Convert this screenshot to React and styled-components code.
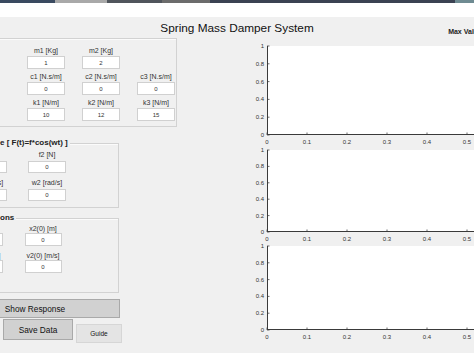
import React from 'react';
import styled, { createGlobalStyle } from 'styled-components';

const GlobalStyle = createGlobalStyle`
  body {
    margin: 0;
    background: #fff;
    font-family: "Liberation Sans", Arial, sans-serif;
  }
`;

const Page = styled.div`
  width: 474px;
  height: 355px;
  overflow: hidden;
  background: #fff;
`;

const TitleBar = styled.div`
  height: 3px;
  background: linear-gradient(
    90deg,
    #3a4a60 0 55px,
    #a9a9a9 55px 107px,
    #50555c 107px 162px,
    #6c6c6c 162px 210px,
    #3b4252 210px 455px,
    #6f8b92 455px
  );
`;

const Spacer = styled.div`
  height: 14px;
`;

const Window = styled.div`
  height: 336px;
  background: #f0f0f0;
  overflow: hidden;
  display: flex;
  flex-direction: column;
`;

const Header = styled.div`
  height: 19px;
  flex: none;
  display: grid;
  grid-template-columns: 1fr auto 1fr;
  align-items: start;
`;

const Title = styled.div`
  grid-column: 2;
  font-size: 11.8px;
  line-height: 14px;
  padding-top: 4px;
  color: #111;
  white-space: nowrap;
`;

const MaxLabel = styled.div`
  justify-self: end;
  margin-right: -8px;
  margin-top: 11px;
  font-size: 7px;
  line-height: 8px;
  font-weight: bold;
  color: #222;
  white-space: nowrap;
`;

const Body = styled.div`
  display: flex;
  flex: 1;
`;

const LeftCol = styled.div`
  width: 180px;
  flex: none;
  padding-top: 2px;
  display: flex;
  flex-direction: column;
`;

const RightCol = styled.div`
  flex: 1;
  padding-top: 10px;
  display: flex;
  flex-direction: column;
`;

const Panel = styled.div`
  box-sizing: border-box;
  margin-left: ${p => p.$left}px;
  margin-top: ${p => p.$mt || 0}px;
  width: ${p => p.$width}px;
  height: ${p => p.$height}px;
  flex: none;
  border: 1px solid #d2d2d2;
  box-shadow: inset 1px 1px 0 #fbfbfb;
  padding-left: ${p => p.$pad}px;
`;

const Legend = styled.div`
  width: fit-content;
  margin: -6px 0 0 ${p => p.$offset}px;
  padding-right: 2px;
  background: #f0f0f0;
  font-size: 8px;
  line-height: 10px;
  font-weight: bold;
  color: #222;
  white-space: nowrap;
`;

const Grid = styled.div`
  display: grid;
  grid-template-columns: repeat(${p => p.$cols}, 44px);
  column-gap: ${p => p.$gap}px;
  row-gap: ${p => p.$rowGap}px;
  margin-top: ${p => p.$top}px;
  padding-left: ${p => p.$indent || 0}px;
`;

const Cell = styled.div`
  display: flex;
  flex-direction: column;
  align-items: center;
`;

const FieldLabel = styled.div`
  font-size: 7px;
  line-height: 9px;
  color: #333;
  white-space: nowrap;
  margin-bottom: ${p => p.$mb}px;
`;

const Field = styled.input`
  box-sizing: border-box;
  width: ${p => p.$w || 38}px;
  height: ${p => p.$h || 13}px;
  padding: 0;
  border: 1px solid #d0d0d0;
  background: #fff;
  font-family: inherit;
  font-size: 6px;
  text-align: center;
  color: #333;
  outline: none;
`;

const Button = styled.button`
  box-sizing: border-box;
  flex: none;
  margin: ${p => p.$margin || '0'};
  width: ${p => p.$width}px;
  height: ${p => p.$height}px;
  padding: 0;
  font-family: inherit;
  font-size: ${p => (p.$light ? 6.5 : 8.3)}px;
  color: #111;
  background: ${p => (p.$light ? '#e4e4e4' : '#d1d1d1')};
  border: 1px solid ${p => (p.$light ? '#d6d6d6' : '#a9a9a9')};
`;

const ButtonRow = styled.div`
  display: flex;
  align-items: flex-start;
  margin-top: 1px;
`;

const Blank = styled.div``;

function Input({ label, value, mb, w, h }) {
  return (
    <Cell>
      <FieldLabel $mb={mb}>{label}</FieldLabel>
      <Field readOnly value={value} $w={w} $h={h} />
    </Cell>
  );
}

function Plot({ h, below }) {
  const yTicks = [0, 0.2, 0.4, 0.6, 0.8, 1];
  const xTicks = [0, 0.1, 0.2, 0.3, 0.4, 0.5];
  const x0 = 87;
  return (
    <svg width="294" height={h + below} style={{ overflow: 'visible', flex: 'none' }}>
      <rect x={x0} y={0} width={207} height={h} fill="#fff" />
      {yTicks.map(v => {
        const y = h - v * h;
        return (
          <g key={v}>
            <line x1={x0} x2={x0 + 2.5} y1={y} y2={y} stroke="#444" strokeWidth="0.8" />
            <text x={x0 - 3} y={y + 2} fontSize="6" textAnchor="end" fill="#333">
              {v}
            </text>
          </g>
        );
      })}
      {xTicks.map((v, i) => {
        const x = x0 + 40 * i;
        return (
          <g key={v}>
            <line x1={x} x2={x} y1={h} y2={h - 2.5} stroke="#444" strokeWidth="0.8" />
            <text x={x} y={h + 9} fontSize="6" textAnchor="middle" fill="#333">
              {v}
            </text>
          </g>
        );
      })}
      <line x1={x0 + 0.5} x2={x0 + 0.5} y1={0} y2={h} stroke="#3a3a3a" strokeWidth="1" />
      <line x1={x0} x2={294} y1={h - 0.5} y2={h - 0.5} stroke="#3a3a3a" strokeWidth="1" />
    </svg>
  );
}

export default function App() {
  return (
    <Page>
      <GlobalStyle />
      <TitleBar />
      <Spacer />
      <Window>
        <Header>
          <Title>Spring Mass Damper System</Title>
          <MaxLabel>Max Value</MaxLabel>
        </Header>
        <Body>
          <LeftCol>
            <Panel $left={-20} $width={197} $height={89} $pad={43}>
              <Grid $cols={3} $gap={11} $rowGap={3} $top={7}>
                <Input label="m1 [Kg]" value="1" mb={1} />
                <Input label="m2 [Kg]" value="2" mb={1} />
                <Blank />
                <Input label="c1 [N.s/m]" value="0" mb={1} />
                <Input label="c2 [N.s/m]" value="0" mb={1} />
                <Input label="c3 [N.s/m]" value="0" mb={1} />
                <Input label="k1 [N/m]" value="10" mb={1} />
                <Input label="k2 [N/m]" value="12" mb={1} />
                <Input label="k3 [N/m]" value="15" mb={1} />
              </Grid>
            </Panel>

            <Panel $left={-50} $width={169} $height={65} $mt={16} $pad={0}>
              <Legend $offset={49}>e [ F(t)=f*cos(wt) ]</Legend>
              <Grid $cols={2} $gap={15} $rowGap={5} $top={2} $indent={15}>
                <Input label="f1 [N]" value="0" mb={2} h={12} />
                <Input label="f2 [N]" value="0" mb={2} h={12} />
                <Input label="w1 [rad/s]" value="0" mb={2} h={12} />
                <Input label="w2 [rad/s]" value="0" mb={2} h={12} />
              </Grid>
            </Panel>

            <Panel $left={-50} $width={169} $height={75} $mt={10} $pad={0}>
              <Legend $offset={49}>ons</Legend>
              <Grid $cols={2} $gap={15} $rowGap={5} $top={1} $indent={11}>
                <Input label="x1(0) [m]" value="0" mb={0} w={37} />
                <Input label="x2(0) [m]" value="0" mb={0} w={37} />
                <Input label="v1(0) [m/s]" value="0" mb={0} w={37} />
                <Input label="v2(0) [m/s]" value="0" mb={0} w={37} />
              </Grid>
            </Panel>

            <Button $margin="6px 0 0 -50px" $width={170} $height={19}>
              Show Response
            </Button>
            <ButtonRow>
              <Button $margin="0 0 0 3px" $width={70} $height={21}>
                Save Data
              </Button>
              <Button $light $margin="5px 0 0 3px" $width={46} $height={19}>
                Guide
              </Button>
            </ButtonRow>
          </LeftCol>

          <RightCol>
            <Plot h={89} below={15} />
            <Plot h={82} below={14} />
            <Plot h={84} below={10} />
          </RightCol>
        </Body>
      </Window>
    </Page>
  );
}
